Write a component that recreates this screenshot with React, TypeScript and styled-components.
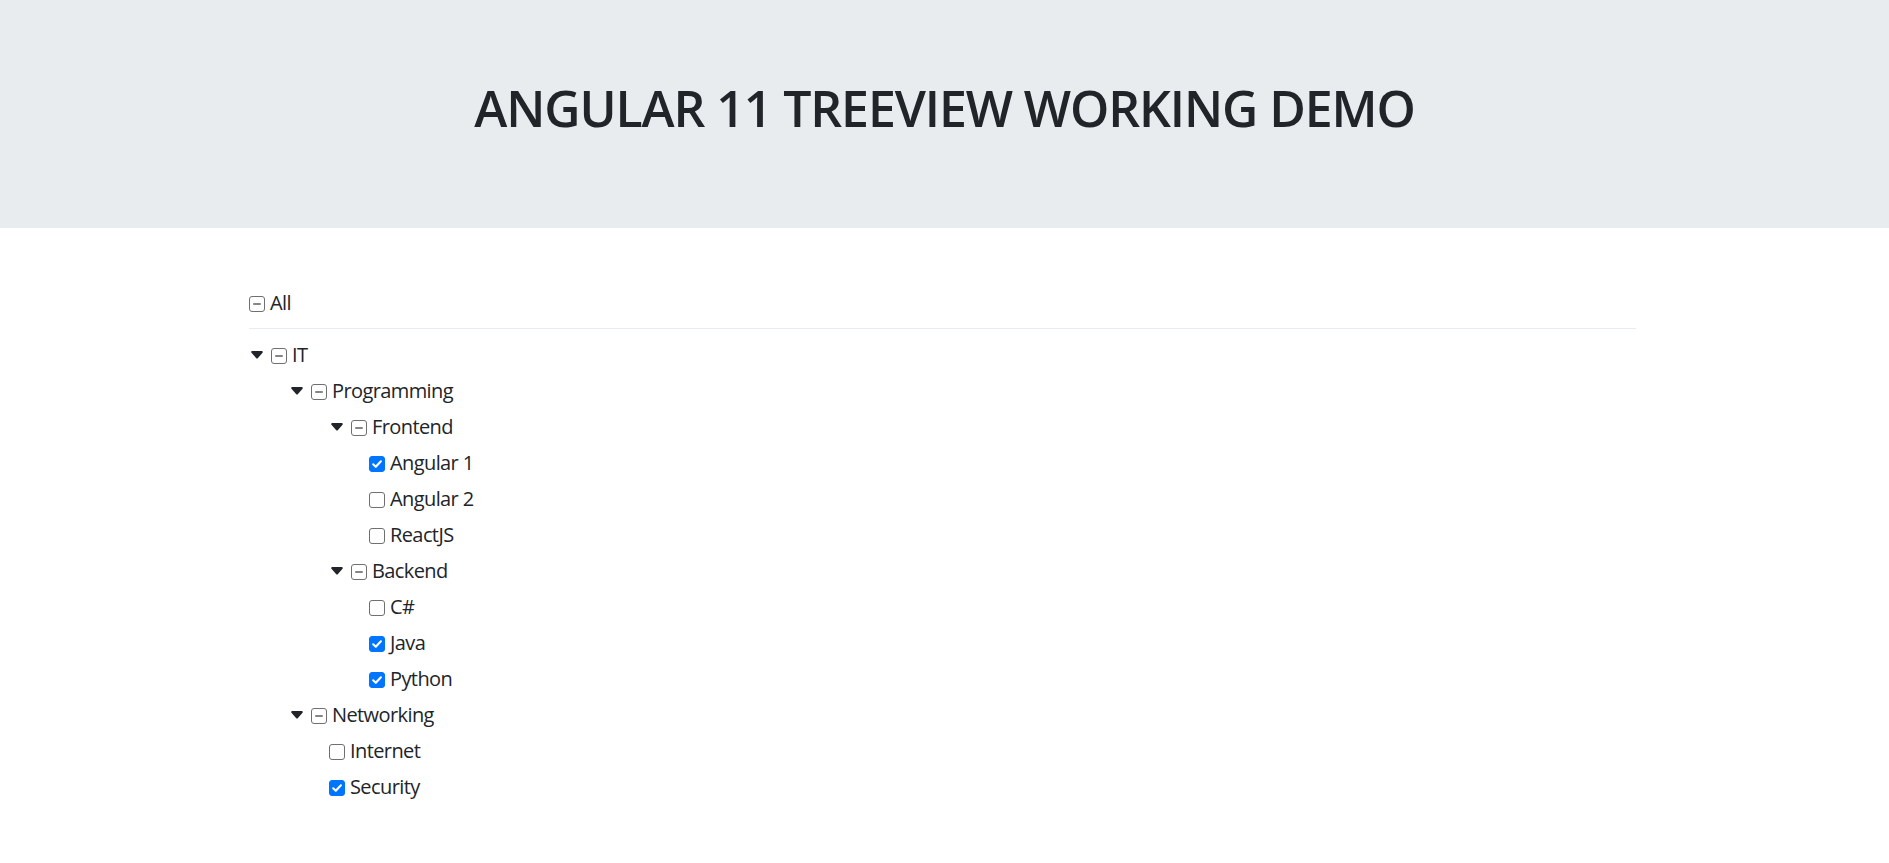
import React from "react";
import styled, { createGlobalStyle, css } from "styled-components";

type CheckState = "checked" | "unchecked" | "mixed";

interface TreeNode {
  text: string;
  state: CheckState;
  children?: TreeNode[];
}

const tree: TreeNode[] = [
  {
    text: "IT",
    state: "mixed",
    children: [
      {
        text: "Programming",
        state: "mixed",
        children: [
          {
            text: "Frontend",
            state: "mixed",
            children: [
              { text: "Angular 1", state: "checked" },
              { text: "Angular 2", state: "unchecked" },
              { text: "ReactJS", state: "unchecked" },
            ],
          },
          {
            text: "Backend",
            state: "mixed",
            children: [
              { text: "C#", state: "unchecked" },
              { text: "Java", state: "checked" },
              { text: "Python", state: "checked" },
            ],
          },
        ],
      },
      {
        text: "Networking",
        state: "mixed",
        children: [
          { text: "Internet", state: "unchecked" },
          { text: "Security", state: "checked" },
        ],
      },
    ],
  },
];

const GlobalStyle = createGlobalStyle`
  body {
    margin: 0;
    font-family: "Segoe UI", "Open Sans", "Noto Sans", sans-serif;
    color: #212529;
    background: #fff;
  }
`;

const Checkbox = ({ state }: { state: CheckState }) => (
  <Box $state={state}>
    {state === "checked" && (
      <svg width="12" height="12" viewBox="0 0 12 12">
        <path d="M2.2 6.3 4.8 8.8 9.9 3.3" fill="none" stroke="#fff" strokeWidth="2.1" strokeLinecap="round" strokeLinejoin="round" />
      </svg>
    )}
    {state === "mixed" && <Dash />}
  </Box>
);

const Caret = () => (
  <CaretIcon viewBox="0 0 16 16" fill="currentColor">
    <path d="M7.247 11.14 2.451 5.658C1.885 5.013 2.345 4 3.204 4h9.592a1 1 0 0 1 .753 1.659l-4.796 5.48a1 1 0 0 1-1.506 0z" />
  </CaretIcon>
);

const TreeItem = ({ node, nested }: { node: TreeNode; nested: boolean }) => (
  <Item $nested={nested}>
    <Row>
      {node.children && <Caret />}
      <Checkbox state={node.state} />
      <Label>{node.text}</Label>
    </Row>
    {node.children?.map((child) => (
      <TreeItem key={child.text} node={child} nested />
    ))}
  </Item>
);

const App = () => {
  return (
    <>
      <GlobalStyle />
      <Jumbotron>
        <Title>ANGULAR 11 TREEVIEW WORKING DEMO</Title>
      </Jumbotron>
      <Container>
        <AllRow>
          <Checkbox state="mixed" />
          <Label>All</Label>
        </AllRow>
        <Divider />
        {tree.map((node) => (
          <TreeItem key={node.text} node={node} nested={false} />
        ))}
      </Container>
    </>
  );
};

export default App;

const Jumbotron = styled.div`
  background-color: #e9ecef;
  padding: 78px 0 80px;
  text-align: center;
`;

const Title = styled.h1`
  margin: 0 0 10px;
  font-size: 50px;
  line-height: 60px;
  font-weight: 600;
  letter-spacing: -1.1px;
  color: #212529;
`;

const Container = styled.div`
  width: 1387px;
  margin: 60px 0 0 249px;
`;

const AllRow = styled.div`
  display: flex;
  align-items: center;
  height: 30px;
`;

const Divider = styled.div`
  height: 0;
  margin: 10px 0 11px;
  border-top: 1px solid #e9ecef;
`;

const Item = styled.div<{ $nested: boolean }>`
  margin-left: ${(p) => (p.$nested ? "40px" : "0")};
`;

const Row = styled.div`
  display: flex;
  align-items: center;
  height: 30px;
  margin-bottom: 6px;
`;

const CaretIcon = styled.svg`
  width: 16px;
  height: 16px;
  margin-right: 6px;
  color: #212529;
  flex-shrink: 0;
`;

const Box = styled.span<{ $state: CheckState }>`
  box-sizing: border-box;
  width: 16px;
  height: 16px;
  margin-top: 1px;
  border-radius: 3px;
  display: inline-flex;
  align-items: center;
  justify-content: center;
  flex-shrink: 0;
  ${(p) =>
    p.$state === "checked"
      ? css`
          background: #0075ff;
          border: 1px solid #0075ff;
        `
      : css`
          background: #fff;
          border: 1.3px solid #6f6f6f;
        `}
`;

const Dash = styled.span`
  width: 8px;
  height: 2px;
  background: #858585;
  border-radius: 1px;
`;

const Label = styled.span`
  margin-left: 5px;
  font-size: 20px;
  line-height: 30px;
  letter-spacing: -0.6px;
  white-space: nowrap;
`;
